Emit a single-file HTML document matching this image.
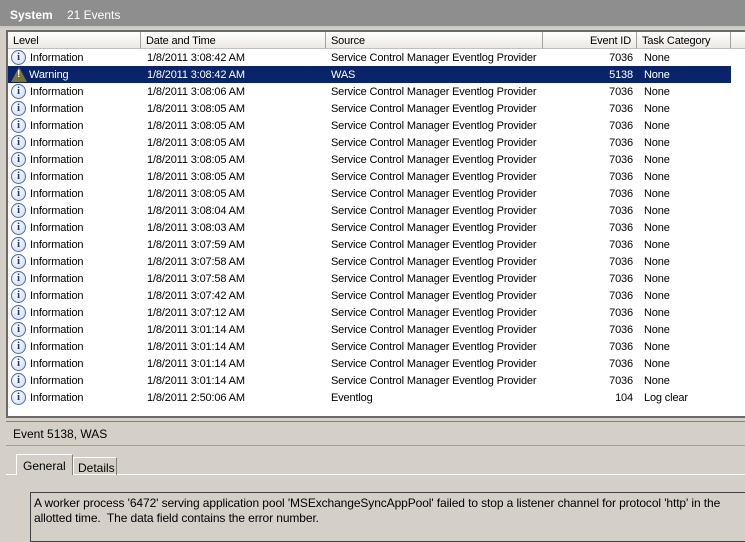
<!DOCTYPE html><html><head><style>
*{margin:0;padding:0;box-sizing:border-box}
body{width:745px;height:535px;overflow:hidden;background:#d4d0c8;font-family:"Liberation Sans",sans-serif;font-size:11px;color:#000;position:relative}
.title{position:absolute;left:0;top:0;width:745px;height:28px;background:#8e8e8e;border-bottom:2px solid #c8c8c8}
.title b{position:absolute;left:10px;top:8px;color:#fff;font-size:12px}
.title span{position:absolute;left:67px;top:8px;color:#fff;font-size:12px}
.list{position:absolute;left:6px;top:30px;width:745px;height:388px;background:#fff;border:2px solid #6a6a6a;border-right:none;letter-spacing:-0.15px}
.hdr{position:absolute;top:0;height:17px;background:linear-gradient(#fff,#ece9e2);border-right:1px solid #a0a0a0;border-bottom:1px solid #c0c0c0;padding:3px 0 0 5px}
.row{position:absolute;left:0;height:17px;width:723px}
.row div{position:absolute;top:3px;white-space:nowrap}
.sel{background:#0a246a;color:#fff}
.ic{position:absolute;left:3px;top:1px!important;width:15px;height:15px;border-radius:50%;border:1px solid #4a6aa8;background:radial-gradient(circle at 40% 35%,#fff,#c8d8f0);color:#1a3a9a;font:bold 11px "Liberation Serif",serif;text-align:center;line-height:13px}
.wr{position:absolute;left:3px;top:1px!important;width:0;height:0;border-left:8px solid transparent;border-right:8px solid transparent;border-bottom:15px solid #7a7430}
.wx{position:absolute;left:9px;top:3px!important;color:#fff;font:bold 10px "Liberation Sans",sans-serif}
.det{position:absolute;left:6px;top:421px;width:745px;height:114px;border-top:1px solid #808080}
</style></head><body>
<div class="title"><b>System</b><span>21 Events</span></div>
<div class="list">
<div class="hdr" style="left:0;width:133px">Level</div>
<div class="hdr" style="left:133px;width:185px">Date and Time</div>
<div class="hdr" style="left:318px;width:217px">Source</div>
<div class="hdr" style="left:535px;width:94px;text-align:right;padding-right:5px">Event ID</div>
<div class="hdr" style="left:629px;width:94px">Task Category</div>
<div class="hdr" style="left:723px;width:22px"></div>
<div id="rows"></div>
</div>
<div class="det">
<div style="position:absolute;left:0;top:0;width:745px;height:24px;border-bottom:1px solid #a0a0a0;padding:5px 0 0 7px;font-size:12px">Event 5138, WAS</div>
<div style="position:absolute;left:0;top:52px;width:745px;border-top:1px solid #fff"></div>
<div style="position:absolute;left:10px;top:32px;width:57px;height:21px;background:#d4d0c8;border:1px solid #fff;border-bottom:none;border-right:1px solid #808080;padding:4px 0 0 6px;font-size:12px">General</div>
<div style="position:absolute;left:67px;top:35px;width:44px;height:18px;border:1px solid #fff;border-right:1px solid #808080;border-bottom:none;padding:3px 0 0 4px;font-size:12px">Details</div>
<div style="position:absolute;left:24px;top:70px;width:730px;height:50px;border:1px solid #404040;padding:3px 0 0 3px;font-size:12px;line-height:15px;letter-spacing:-0.1px">A worker process '6472' serving application pool 'MSExchangeSyncAppPool' failed to stop a listener channel for protocol 'http' in the allotted time.&nbsp; The data field contains the error number.</div>
</div>
<script>
var d=["3:08:42","3:08:42","3:08:06","3:08:05","3:08:05","3:08:05","3:08:05","3:08:05","3:08:05","3:08:04","3:08:03","3:07:59","3:07:58","3:07:58","3:07:42","3:07:12","3:01:14","3:01:14","3:01:14","3:01:14","2:50:06"];
var h="";
for(var i=0;i<21;i++){var w=i==1,l=i==20;
h+='<div class="row'+(w?' sel':'')+'" style="top:'+(17+17*i)+'px">'+(w?'<div class="wr"></div><div class="wx">!</div>':'<div class="ic">i</div>')+
'<div style="left:'+(w?21:22)+'px">'+(w?'Warning':'Information')+'</div><div style="left:139px">1/8/2011 '+d[i]+' AM</div><div style="left:323px">'+(w?'WAS':l?'Eventlog':'Service Control Manager Eventlog Provider')+'</div><div style="right:98px">'+(w?'5138':l?'104':'7036')+'</div><div style="left:636px">'+(l?'Log clear':'None')+'</div></div>';}
document.getElementById("rows").innerHTML=h;
</script>
</body></html>
